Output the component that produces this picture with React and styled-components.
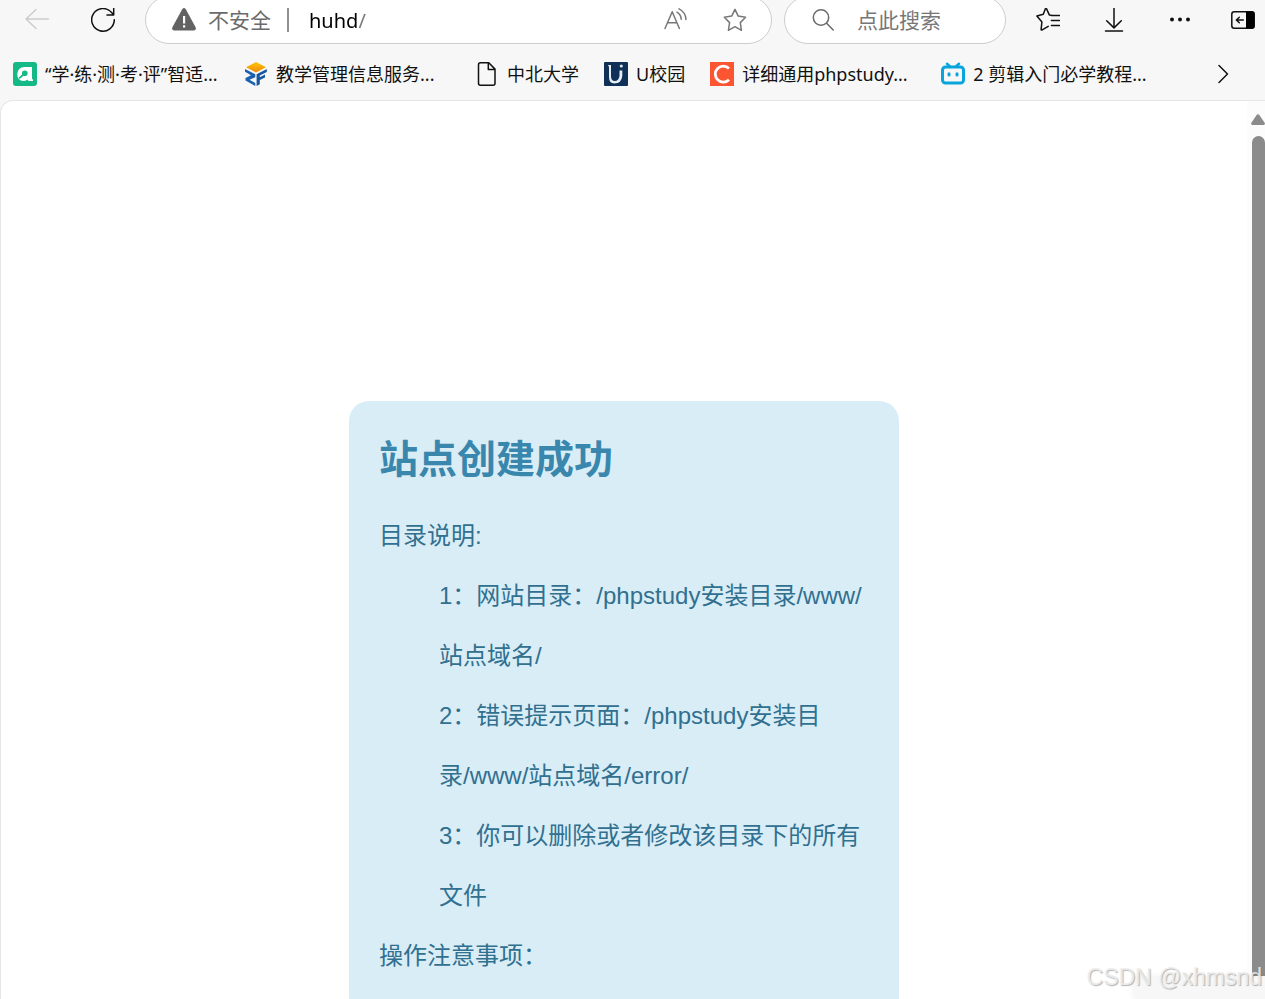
import React from "react";
import styled, { createGlobalStyle } from "styled-components";

const GlobalStyle = createGlobalStyle`
  * { box-sizing: border-box; }
  html, body { margin: 0; background: #f7f7f7; overflow: hidden; }
  button { border: 0; padding: 0; background: none; color: inherit; font: inherit; cursor: pointer; }
`;

const uiFont = `"Noto Sans", "Noto Sans CJK SC", sans-serif`;

const Browser = styled.div`
  height: 100vh;
  display: flex;
  flex-direction: column;
  overflow: hidden;
  background: #f7f7f7;
  font-family: ${uiFont};
  color: #111;
`;

const Toolbar = styled.header`
  flex: none;
  display: flex;
  align-items: center;
  height: 48px;
  margin-top: -4px;
  padding-left: 4px;
`;

const ToolButton = styled.button`
  flex: none;
  display: flex;
  align-items: center;
  justify-content: ${(p) => (p.$edge ? "flex-end" : "center")};
  width: ${(p) => (p.$edge ? 52 : 66)}px;
  height: 48px;
  padding-right: ${(p) => (p.$edge ? 10 : 0)}px;
`;

const Pill = styled.div`
  display: flex;
  align-items: center;
  height: 48px;
  border: 1px solid #cdcdcd;
  border-radius: 24px;
  background: #fff;
  color: #6b6b6b;
  font-size: 21px;
  line-height: 24px;
`;

const AddressBar = styled(Pill)`
  flex: 1;
  min-width: 0;
  margin: 0 12px 0 9px;
  padding: 0 24px 0 26px;
`;

const SearchBar = styled(Pill)`
  flex: none;
  width: 222px;
  margin-right: 9px;
  padding: 0 20px 0 27px;
  gap: 21px;
`;

const Security = styled.button`
  flex: none;
  display: flex;
  align-items: center;
  gap: 12px;
  padding-right: 16px;
  white-space: nowrap;
`;

const Divider = styled.span`
  flex: none;
  width: 2px;
  height: 24px;
  margin-right: 20px;
  background: #8f8f8f;
`;

const TextField = styled.input`
  flex: 1;
  min-width: 0;
  width: 0;
  padding: 0;
  border: 0;
  outline: 0;
  background: transparent;
  font-family: ${uiFont};
  font-size: ${(p) => p.$size}px;
  color: #000;
  &::placeholder { color: #777; opacity: 1; }
`;

/* The host name is black and the path after it is grey. */
const AddressField = styled(TextField)`
  background: linear-gradient(90deg, #000 49px, #777 49px);
  background-clip: text;
  -webkit-background-clip: text;
  color: transparent;
  caret-color: #000;
`;

const FieldActions = styled.div`
  flex: none;
  display: flex;
  align-items: center;
  gap: 35px;
  button { display: flex; }
`;

const Bookmarks = styled.nav`
  flex: none;
  display: flex;
  align-items: center;
  gap: 25px;
  height: 56px;
  padding: 4px 35px 0 13px;
`;

const Bookmark = styled.a`
  flex: none;
  display: flex;
  align-items: center;
  gap: 8px;
  width: ${(p) => (p.$long ? "206px" : "auto")};
  color: #111;
  font-size: 18px;
  line-height: 24px;
  text-decoration: none;
  white-space: nowrap;
  svg { flex: none; }
`;

const MoreBookmarks = styled.button`
  display: flex;
  margin-left: auto;
`;

const Viewport = styled.main`
  flex: 1;
  min-height: 0;
  display: flex;
  overflow: hidden;
  border: 1px solid #e6e6e6;
  border-width: 1px 0 0 1px;
  border-radius: 13px 0 0 0;
  background: #fff;
`;

const Page = styled.div`
  flex: 1;
  min-width: 0;
  overflow: hidden;
  font-family: "Liberation Sans", "Noto Sans CJK SC", sans-serif;
`;

const Card = styled.section`
  max-width: 550px;
  margin: 300px auto 0;
  padding: 30px;
  border-radius: 20px;
  background: #d9edf7;
  color: #31708f;
  font-size: 24px;
  line-height: 60px;
`;

const Title = styled.h1`
  margin: 0 0 17px;
  color: #3a87ad;
  font-size: 39px;
  line-height: 58px;
  font-weight: 700;
`;

const Paragraph = styled.p`
  margin: 0;
`;

const Notes = styled.ul`
  margin: 0;
  padding: 0 0 0 60px;
  list-style: none;
`;

const Scrollbar = styled.div`
  flex: none;
  display: flex;
  flex-direction: column;
  align-items: flex-end;
  width: 18px;
  padding: 13px 0 23px;
  background: #fcfcfc;
`;

const Thumb = styled.div`
  flex: 1;
  width: 13px;
  margin-top: 11px;
  border-radius: 7px 7px 0 0;
  background: #8b8b8b;
`;

const Corner = styled.div`
  position: absolute;
  right: 0;
  bottom: 0;
  width: 130px;
  height: 23px;
  background: #f7f7f7;
  box-shadow: -2px 0 6px rgba(0, 0, 0, 0.05);
`;

const Watermark = styled.span`
  position: absolute;
  right: 3px;
  bottom: 8px;
  color: rgba(238, 238, 238, 0.9);
  font-family: "Liberation Sans", sans-serif;
  font-size: 23px;
  line-height: 28px;
  text-shadow: 1px 1px 1px rgba(120, 120, 120, 0.55);
`;

const Icon = ({ size = 24, children, ...rest }) => (
  <svg width={size} height={24} viewBox={`0 0 ${size} 24`} fill="none" stroke="currentColor"
    strokeWidth="1.5" strokeLinecap="round" strokeLinejoin="round" aria-hidden="true" {...rest}>
    {children}
  </svg>
);

const BackIcon = () => (
  <Icon stroke="#cccccc"><path d="M23.5 11H1M11 1.500L1 11l10 9.500" /></Icon>
);
const ReloadIcon = () => (
  <Icon stroke="#111"><path d="M23.300 11.700a11.300 11.300 0 1 1-2.700-7.200L22.500 6.800M22.700.5v6.500h-6.700" /></Icon>
);
const WarningIcon = () => (
  <Icon stroke="none">
    <path d="M10.200 1.300Q12-1.200 13.800 1.300L23.600 19.200Q24.600 22.300 21.800 22.500H2.200Q-.6 22.300.4 19.200Z" fill="#626262" />
    <path d="M11 8h2.200v7.500H11zM11 17.300h2.200v2.200H11z" fill="#fff" />
  </Icon>
);
const ReadAloudIcon = () => (
  <Icon stroke="#777"><path d="M1 20.500L8.200 3.800l7.200 16.700M3.500 14.800h9.400M13 4.200q4 2.300 4.200 7M15 .8q6.800 3.500 7 10.700" /></Icon>
);
const StarIcon = () => (
  <Icon stroke="#777"><path d="M12 1.400l3.200 6.700 7.400 1.100-5.300 5.400 1.100 7.700-6.400-3.600-6.600 3.600 1.200-7.700L1.300 9.200l7.400-1.100z" /></Icon>
);
const SearchIcon = () => (
  <Icon stroke="#6b6b6b"><circle cx="9" cy="9.500" r="7.700" /><path d="M14.600 15.200l6.600 6.800" /></Icon>
);
const FavoritesIcon = () => (
  <Icon><path d="M15.400 7.300l-2.100-.4L10.600.9Q9.900.3 9.300.9L7.300 6.300.9 8l5 5.900-.8 7.700q.3.700 1.100.3l6-3.500M15.400 7.600h8M15.400 12.600h8M15.400 17.600h8" /></Icon>
);
const DownloadIcon = () => (
  <Icon><path d="M12 .5v19M4.700 12.700l7.300 7.200 7.300-7.200M3.500 23h17" /></Icon>
);
const DotsIcon = () => (
  <Icon stroke="none" fill="#111"><circle cx="4" cy="11.500" r="2" /><circle cx="12" cy="11.500" r="2" /><circle cx="20" cy="11.500" r="2" /></Icon>
);
const SidebarIcon = () => (
  <Icon>
    <rect x=".8" y="3.700" width="22.400" height="16.600" rx="2.500" />
    <path d="M15 3.500h6.500a2 2 0 0 1 2 2v13a2 2 0 0 1-2 2H15z" fill="#000" stroke="none" />
    <path d="M12.300 12H5.500M8.300 9.300L5.300 12l3 2.700" />
  </Icon>
);
const ChevronIcon = () => (
  <Icon size={15}><path d="M4 3.500l8.500 8.500L4 20.500" /></Icon>
);

const ALogo = () => (
  <Icon stroke="none">
    <rect width="24" height="24" rx="3" fill="#14b985" />
    <path d="M11.500 5H19v12.300h1V19h-3.500q-1.600 0-2.200-1.500-1.600 1.500-4 1.500Q4.400 18.600 4.200 12.200 4.600 5.400 11.500 5z" fill="#fff" />
    <circle cx="11.800" cy="11.300" r="2.800" fill="#14b985" />
    <path d="M11 12l-4.300 3.800" stroke="#14b985" strokeWidth="1.800" />
  </Icon>
);
const CubeLogo = () => (
  <Icon stroke="none">
    <defs>
      <linearGradient id="cubeTop" x1="0" x2="0" y1="0" y2="1">
        <stop stopColor="#ffc400" /><stop offset="1" stopColor="#f08a10" />
      </linearGradient>
    </defs>
    <path d="M12 0l10 5.200-10 5.300L2 5.200z" fill="url(#cubeTop)" />
    <path d="M1 7l10.300 5.300v3l-5.800 2.500 5.800 3.200v3L1.500 18.500v-2.600l5.500-2.700-6-3.400z" fill="#1b62ae" />
    <path d="M22.800 7L12.600 12.300V24l3.200-1.700v-4.200l5.200-2.600v-2.900l-5.200 2.700v-1.700l7-3.600z" fill="#1658a0" />
  </Icon>
);
const FileIcon = () => (
  <Icon><path d="M5.500.8h8.300l6.200 6.300v14.100q0 2-2 2H5.500q-2 0-2-2V2.800q0-2 2-2zM13.300 1v6.500h6.500" /></Icon>
);
const ULogo = () => (
  <Icon stroke="none">
    <rect width="24" height="24" rx="1" fill="#0f3057" />
    <path d="M4 3h3v11q0 5 3.800 5t4.700-5V8.500h2.800V14q-.8 7.500-8 7.500-5.300 0-5.300-6.500V5z" fill="#e6edf4" />
    <circle cx="17.300" cy="4" r="1.600" fill="#d5e1ec" />
  </Icon>
);
const CLogo = () => (
  <Icon stroke="none">
    <rect width="24" height="24" fill="#fc5531" />
    <path d="M19 6.500a8 8 0 1 0 0 11.200" stroke="#fff" strokeWidth="2.800" strokeLinecap="butt" />
  </Icon>
);
const TvLogo = () => (
  <Icon stroke="#08a4dc">
    <rect x="1.500" y="5" width="21" height="16" rx="3" strokeWidth="3" />
    <path d="M6 1.800l3 2.600M18 1.800l-3 2.600" strokeWidth="2.500" />
    <path d="M8 11.800v1.200M16 11.800v1.200" strokeWidth="3" />
  </Icon>
);

const bookmarks = [
  { label: "“学·练·测·考·评”智适...", Logo: ALogo, long: true },
  { label: "教学管理信息服务...", Logo: CubeLogo, long: true },
  { label: "中北大学", Logo: FileIcon },
  { label: "U校园", Logo: ULogo },
  { label: "详细通用phpstudy...", Logo: CLogo, long: true },
  { label: "2 剪辑入门必学教程...", Logo: TvLogo, long: true },
];

export default function App() {
  return (
    <Browser lang="zh-CN">
      <GlobalStyle />
      <Toolbar>
        <ToolButton aria-label="返回" disabled><BackIcon /></ToolButton>
        <ToolButton aria-label="刷新"><ReloadIcon /></ToolButton>
        <AddressBar>
          <Security><WarningIcon />不安全</Security>
          <Divider />
          <AddressField $size={20} aria-label="地址" defaultValue="huhd/" />
          <FieldActions>
            <button aria-label="大声朗读"><ReadAloudIcon /></button>
            <button aria-label="收藏此页"><StarIcon /></button>
          </FieldActions>
        </AddressBar>
        <SearchBar>
          <SearchIcon />
          <TextField $size={21} aria-label="搜索" placeholder="点此搜索" />
        </SearchBar>
        <ToolButton aria-label="收藏夹"><FavoritesIcon /></ToolButton>
        <ToolButton aria-label="下载"><DownloadIcon /></ToolButton>
        <ToolButton aria-label="更多"><DotsIcon /></ToolButton>
        <ToolButton aria-label="侧边栏" $edge><SidebarIcon /></ToolButton>
      </Toolbar>
      <Bookmarks aria-label="收藏夹栏">
        {bookmarks.map(({ label, Logo, long }) => (
          <Bookmark key={label} href="#" $long={long}><Logo />{label}</Bookmark>
        ))}
        <MoreBookmarks aria-label="更多收藏"><ChevronIcon /></MoreBookmarks>
      </Bookmarks>
      <Viewport>
        <Page>
          <Card>
            <Title>站点创建成功</Title>
            <Paragraph>目录说明:</Paragraph>
            <Notes>
              <li>1：网站目录：/phpstudy安装目录/www/站点域名/</li>
              <li>2：错误提示页面：/phpstudy安装目录/www/站点域名/error/</li>
              <li>3：你可以删除或者修改该目录下的所有文件</li>
            </Notes>
            <Paragraph>操作注意事项：</Paragraph>
          </Card>
        </Page>
        <Scrollbar aria-hidden="true">
          <svg width="14" height="11" viewBox="0 0 14 11">
            <path d="M5.800.8Q7-.5 8.200.8L13.800 9q.5 1.800-1 2H1.200q-1.500-.2-1-2z" fill="#8b8b8b" />
          </svg>
          <Thumb />
        </Scrollbar>
      </Viewport>
      <Corner />
      <Watermark>CSDN @xhmsnd</Watermark>
    </Browser>
  );
}
